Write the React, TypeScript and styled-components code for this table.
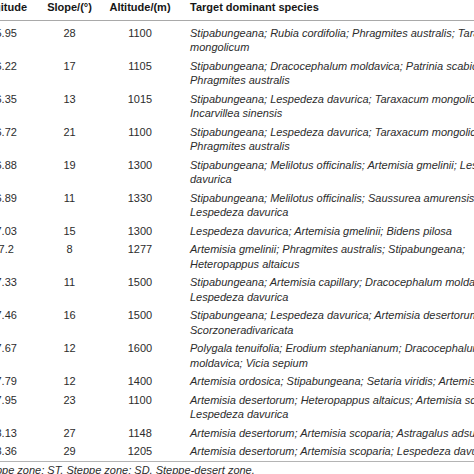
import styled, { createGlobalStyle } from 'styled-components';

const GlobalStyle = createGlobalStyle`
  html, body {
    margin: 0;
    padding: 0;
    background: #ffffff;
    overflow: hidden;
  }
  body {
    font-family: "Liberation Sans", Arial, Helvetica, sans-serif;
  }
`;

// the screenshot is a crop of a wider table, so the frame clips it
const Frame = styled.div`
  width: 474px;
  height: 474px;
  overflow: hidden;
  background: #ffffff;
  color: #2c2c2c;
  font-size: 11px;
  line-height: 14.5px;
`;

const Table = styled.table`
  margin-left: -40px;
  width: 570px;
  border-collapse: collapse;
  table-layout: fixed;
`;

const Col = styled.col<{ $w: number }>`
  width: ${(p) => p.$w}px;
`;

const HeadCell = styled.th<{ $left?: boolean }>`
  padding: 0 4px 5px ${(p) => (p.$left ? '8px' : '4px')};
  border-bottom: 1px solid #a9a9a9;
  font-weight: 700;
  color: #161616;
  text-align: ${(p) => (p.$left ? 'left' : 'center')};
  white-space: nowrap;
`;

const Row = styled.tr`
  &:first-child td {
    padding-top: 5px;
  }
  &:last-child td {
    border-bottom: 1px solid #b4b4b4;
  }
`;

const NumCell = styled.td`
  padding: 2px 4px;
  vertical-align: top;
  text-align: center;
  white-space: nowrap;
`;

const SpeciesCell = styled.td`
  padding: 2px 4px 2px 8px;
  vertical-align: top;
  text-align: left;
  font-style: italic;
`;

const Note = styled.div`
  margin: 1px 0 0 -86px;
  font-style: italic;
  white-space: nowrap;
`;

type Site = [string, number, number, string];

const sites: Site[] = [
  ['115.95', 28, 1100, 'Stipabungeana; Rubia cordifolia; Phragmites australis; Taraxacum mongolicum'],
  ['116.22', 17, 1105, 'Stipabungeana; Dracocephalum moldavica; Patrinia scabiosaefolia; Phragmites australis'],
  ['116.35', 13, 1015, 'Stipabungeana; Lespedeza davurica; Taraxacum mongolicum; Incarvillea sinensis'],
  ['116.72', 21, 1100, 'Stipabungeana; Lespedeza davurica; Taraxacum mongolicum; Phragmites australis'],
  ['116.88', 19, 1300, 'Stipabungeana; Melilotus officinalis; Artemisia gmelinii; Lespedeza davurica'],
  ['116.89', 11, 1330, 'Stipabungeana; Melilotus officinalis; Saussurea amurensis; Lespedeza davurica'],
  ['117.03', 15, 1300, 'Lespedeza davurica; Artemisia gmelinii; Bidens pilosa'],
  ['117.2', 8, 1277, 'Artemisia gmelinii; Phragmites australis; Stipabungeana; Heteropappus altaicus'],
  ['117.33', 11, 1500, 'Stipabungeana; Artemisia capillary; Dracocephalum moldavica; Lespedeza davurica'],
  ['117.46', 16, 1500, 'Stipabungeana; Lespedeza davurica; Artemisia desertorum; Scorzoneradivaricata'],
  ['117.67', 12, 1600, 'Polygala tenuifolia; Erodium stephanianum; Dracocephalum moldavica; Vicia sepium'],
  ['117.79', 12, 1400, 'Artemisia ordosica; Stipabungeana; Setaria viridis; Artemisia frigida'],
  ['117.95', 23, 1100, 'Artemisia desertorum; Heteropappus altaicus; Artemisia scoparia; Lespedeza davurica'],
  ['118.13', 27, 1148, 'Artemisia desertorum; Artemisia scoparia; Astragalus adsurgens'],
  ['118.36', 29, 1205, 'Artemisia desertorum; Artemisia scoparia; Lespedeza davurica'],
];

const App: React.FC = () => (
  <Frame>
    <GlobalStyle />
    <Table>
      <colgroup>
        <Col $w={81} />
        <Col $w={57} />
        <Col $w={84} />
        <Col $w={348} />
      </colgroup>
      <thead>
        <tr>
          <HeadCell>Longitude</HeadCell>
          <HeadCell>Slope/(°)</HeadCell>
          <HeadCell>Altitude/(m)</HeadCell>
          <HeadCell $left>Target dominant species</HeadCell>
        </tr>
      </thead>
      <tbody>
        {sites.map(([lon, slope, alt, species]) => (
          <Row key={lon}>
            <NumCell>{lon}</NumCell>
            <NumCell>{slope}</NumCell>
            <NumCell>{alt}</NumCell>
            <SpeciesCell>{species}</SpeciesCell>
          </Row>
        ))}
      </tbody>
    </Table>
    <Note>MS, Meadow steppe zone; ST, Steppe zone; SD, Steppe-desert zone.</Note>
  </Frame>
);

export default App;
